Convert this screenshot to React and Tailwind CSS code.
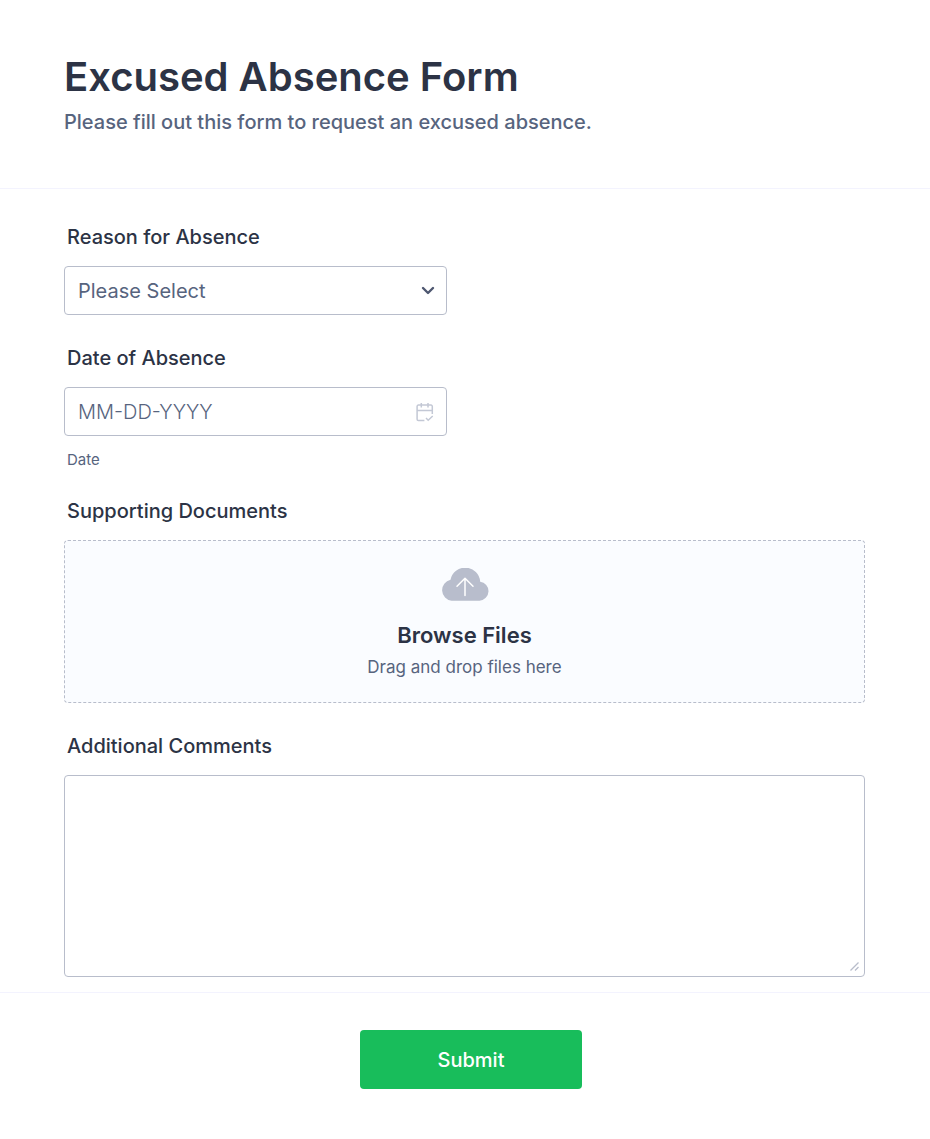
const labelClass = 'block pl-[3px] text-[20px] leading-6 font-medium text-[#2c3345]';
const fieldClass =
  'block w-full rounded-sm border border-[#b8bdcb] bg-white pl-[13px] text-[20px] text-[#57647e] outline-none focus:border-[#5268f3]';

function ChevronIcon() {
  return (
    <svg className="pointer-events-none absolute right-3 top-5 h-[9px] w-[14px]" viewBox="0 0 14 9" fill="none" aria-hidden="true">
      <path d="M2 2 7 7 12 2" stroke="#4e5770" strokeWidth="2.4" strokeLinecap="round" strokeLinejoin="round" />
    </svg>
  );
}

function CalendarIcon() {
  return (
    <svg className="h-5 w-5" viewBox="0 0 20 20" fill="none" stroke="#c3c8d5" strokeWidth="1.5" aria-hidden="true">
      <path d="M17.3 12V4.4a1.3 1.3 0 0 0-1.3-1.3H3.4a1.3 1.3 0 0 0-1.3 1.3v12.9a1.3 1.3 0 0 0 1.3 1.3h6" />
      <path d="M2 8.6h15.3M6.3 1v4.4M13 1v4.4M11 16l2.2 2.2 4.5-4.2" />
    </svg>
  );
}

function CloudIcon() {
  return (
    <svg className="h-[33px] w-12" viewBox="0 0 48 33" aria-hidden="true">
      <path
        d="M10.6 32.7A10.6 10.6 0 0 1 9.5 11.8A15 15 0 0 1 39.2 13.7A9.55 9.55 0 0 1 38.5 32.700Z"
        fill="#b8bdcc"
      />
      <path d="M24 27.5V10.3M16 18.2l8-8 8 8" fill="none" stroke="#fff" strokeWidth="1.5" strokeLinecap="round" strokeLinejoin="round" />
    </svg>
  );
}

function ResizeIcon() {
  return (
    <svg className="pointer-events-none absolute bottom-1.5 right-1.5 h-[9px] w-[9px]" viewBox="0 0 9 9" aria-hidden="true">
      <path d="M.5 8.5l8-8M5 8.5 8.5 5" stroke="#b8bdcb" strokeWidth="1.3" />
    </svg>
  );
}

export default function App() {
  return (
    <form
      className="min-h-screen bg-white font-['Inter',sans-serif] text-[#2c3345]"
      onSubmit={(event) => event.preventDefault()}
    >
      <header className="border-b border-[#f3f3fe] px-16 pt-[52px] pb-[52px]">
        <h1 className="text-[40px] leading-[50px] font-semibold">Excused Absence Form</h1>
        <p className="mt-1.5 text-[20px] leading-7 font-medium text-[#57647e]">
          Please fill out this form to request an excused absence.
        </p>
      </header>

      <div className="flex flex-col gap-[31px] border-b border-[#f3f3fe] pr-[65px] pl-16 pt-9 pb-[15px]">
        <div>
          <label htmlFor="reason" className={labelClass}>Reason for Absence</label>
          <div className="relative mt-[17px] w-full max-w-[383px]">
            <select id="reason" defaultValue="" className={`${fieldClass} h-[49px] appearance-none pr-10`}>
              <option value="">Please Select</option>
              <option>Illness</option>
              <option>Family Emergency</option>
              <option>Other</option>
            </select>
            <ChevronIcon />
          </div>
        </div>

        <div>
          <label htmlFor="date" className={labelClass}>Date of Absence</label>
          <div className="relative mt-[17px] w-full max-w-[383px]">
            <input
              id="date"
              type="text"
              placeholder="MM-DD-YYYY"
              aria-describedby="date-hint"
              className={`${fieldClass} h-[49px] pr-10 placeholder:font-light placeholder:text-[#57647e]`}
            />
            <button type="button" aria-label="Choose date" className="absolute right-3 top-[15px]">
              <CalendarIcon />
            </button>
          </div>
          <p id="date-hint" className="mt-4 pl-[3px] text-[15px] leading-4 text-[#57647e]">Date</p>
        </div>

        <div>
          <label htmlFor="documents" className={labelClass}>Supporting Documents</label>
          <label
            htmlFor="documents"
            className="relative mt-[17px] flex cursor-pointer flex-col items-center rounded-sm border border-dashed border-[#b8bdcb] bg-[#fafcff] pt-[27px] pb-[23px]"
          >
            <CloudIcon />
            <span className="mt-5 text-[22px] leading-7 font-semibold">Browse Files</span>
            <span className="mt-1.5 text-[17px] leading-6 text-[#57647e]">Drag and drop files here</span>
            <input id="documents" type="file" multiple className="sr-only" />
          </label>
        </div>

        <div>
          <label htmlFor="comments" className={labelClass}>Additional Comments</label>
          <div className="relative mt-[17px]">
            <textarea id="comments" className={`${fieldClass} h-[202px] resize-none py-2 pr-3`} />
            <ResizeIcon />
          </div>
        </div>
      </div>

      <footer className="flex justify-center pt-[37px] pb-[50px] pl-3">
        <button type="submit" className="h-[59px] w-[222px] rounded-sm bg-[#18bd5b] text-[20px] font-medium text-white">
          Submit
        </button>
      </footer>
    </form>
  );
}
